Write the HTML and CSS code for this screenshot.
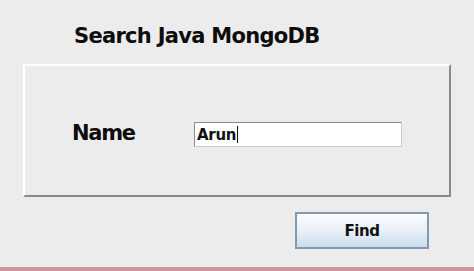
FILE: index.html
```html
<!DOCTYPE html>
<html>
<head>
<meta charset="utf-8">
<link rel="stylesheet" href="styles.css">
</head>
<body>
<div class="window">
  <h1 class="title">Search Java MongoDB</h1>
  <div class="panel">
    <span class="label">Name</span>
    <div class="field"><span class="value">Arun</span><span class="caret"></span></div>
  </div>
  <div class="actions">
    <button class="btn">Find</button>
  </div>
  <div class="bottom-bar"></div>
</div>
</body>
</html>
```
FILE: styles.css
```css
html, body {
  margin: 0;
  padding: 0;
}
body {
  background: #ececec;
  font-family: "DejaVu Sans", Tahoma, sans-serif;
  color: #111;
}
.window {
  width: 474px;
  height: 271px;
  display: flex;
  flex-direction: column;
  background: #ececec;
  overflow: hidden;
}
.title {
  margin: 24px 0 0 74px;
  font-size: 21px;
  font-weight: bold;
  letter-spacing: -0.7px;
  line-height: 24px;
  height: 24px;
  color: #0d0d0d;
}
.panel {
  margin: 16px 0 0 23px;
  width: 424px;
  height: 129px;
  border-top: 2px solid #ffffff;
  border-left: 2px solid #ffffff;
  border-right: 2px solid #8a8a8a;
  border-bottom: 2px solid #8a8a8a;
  display: flex;
  align-items: center;
}
.label {
  margin-left: 47px;
  margin-top: 4px;
  font-size: 21px;
  font-weight: bold;
  letter-spacing: -1.3px;
  width: 122px;
  color: #0d0d0d;
}
.field {
  background: #fff;
  border-top: 1px solid #8c8c8c;
  border-left: 1px solid #8c8c8c;
  border-right: 1px solid #c8c8c8;
  border-bottom: 1px solid #c8c8c8;
  display: flex;
  align-items: center;
  padding-left: 2px;
  box-sizing: border-box;
  width: 208px;
  height: 25px;
  margin-top: 8px;
}
.value {
  font-size: 15px;
  font-weight: bold;
  letter-spacing: -0.3px;
}
.caret {
  width: 1px;
  height: 17px;
  background: #111;
  margin-left: 1px;
}
.actions {
  display: flex;
  justify-content: flex-end;
  padding-right: 45px;
  margin-top: 15px;
}
.btn {
  width: 134px;
  height: 37px;
  border: 2px solid #8299ae;
  background: linear-gradient(#fbfcfe, #e6eef7 55%, #c9dcee);
  font-family: "DejaVu Sans", Tahoma, sans-serif;
  font-size: 15px;
  font-weight: bold;
  letter-spacing: -0.4px;
  color: #111;
  padding: 0;
}
.bottom-bar {
  margin-top: auto;
  height: 4px;
  background: #d2949c;
}
```
